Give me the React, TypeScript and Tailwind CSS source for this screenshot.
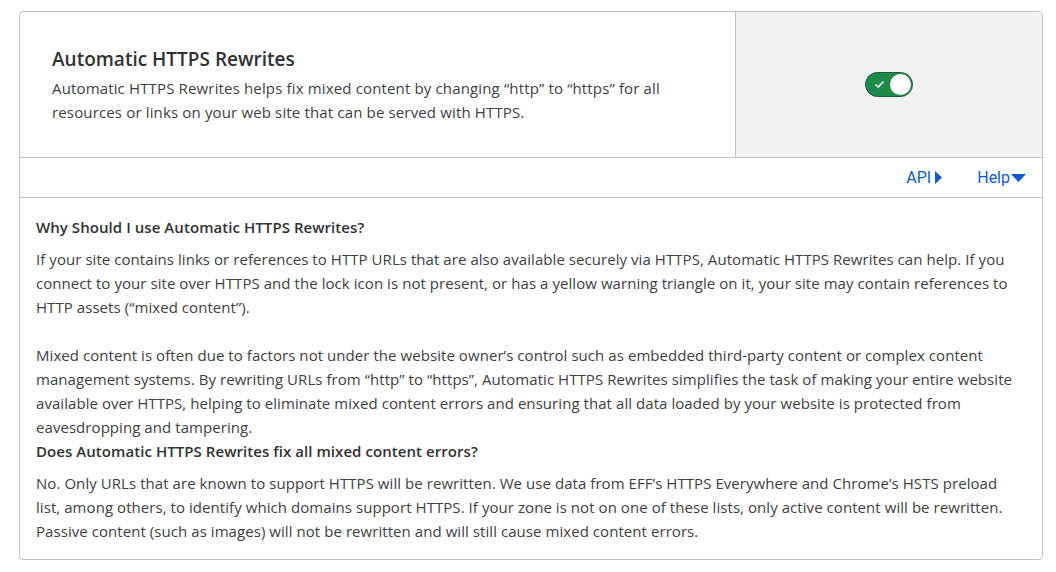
import React from "react";

const font = { fontFamily: '"Open Sans", "Noto Sans", sans-serif' };

function Line({ children }: { children: React.ReactNode }) {
  return <span className="block whitespace-nowrap">{children}</span>;
}

export default function App() {
  return (
    <div className="w-[1056px] h-[572px] bg-white pl-[19px] pt-[11px]" style={font}>
      <div className="w-[1024px] h-[549px] border border-[#c2c2c2] rounded-[4px] overflow-hidden flex flex-col">
        <div className="flex h-[146px] border-b border-[#c2c2c2]">
          <div className="flex-1 pl-[32px] pt-[33px]">
            <h2 className="text-[19px] leading-[28px] font-semibold text-[#313131]">Automatic HTTPS Rewrites</h2>
            <p className="mt-[3px] text-[15px] leading-[24px] tracking-[0.15px] text-[#404040]">
              <Line>Automatic HTTPS Rewrites helps fix mixed content by changing “http” to “https” for all</Line>
              <Line>resources or links on your web site that can be served with HTTPS.</Line>
            </p>
          </div>
          <div className="w-[307px] bg-[#f2f2f2] border-l border-[#c2c2c2] flex items-center justify-center">
            <div className="relative w-[48px] h-[25px] rounded-full bg-[#1e8a4a] border border-[#1a5c35] flex items-center">
              <svg className="absolute left-[8px] top-[7px]" width="11" height="9" viewBox="0 0 11 9">
                <path d="M1.5 4.5 L4.2 7 L9.5 1.5" stroke="white" strokeWidth="1.5" fill="none" />
              </svg>
              <div className="absolute right-[1px] top-[1px] w-[21px] h-[21px] rounded-full bg-white" />
            </div>
          </div>
        </div>
        <div className="h-[40px] border-b border-[#c2c2c2] flex items-center justify-end pr-[16px] gap-[35px] text-[16px] text-[#0a5bd3]" style={{ fontFamily: 'Roboto, "Liberation Sans", sans-serif' }}>
          <span className="flex items-center gap-[3px]">
            API
            <svg width="8" height="13" viewBox="0 0 8 13"><path d="M1 0 L8 6.5 L1 13 Z" fill="#0a5bd3" /></svg>
          </span>
          <span className="flex items-center gap-[1px]">
            Help
            <svg width="15" height="8" viewBox="0 0 15 8"><path d="M0 0 L15 0 L7.5 8 Z" fill="#0a5bd3" /></svg>
          </span>
        </div>
        <div className="flex-1 pl-[16px] pt-[17px] text-[15px] leading-[24px] tracking-[0.06px] text-[#404040]">
          <h3 className="font-semibold text-[#313131] mb-[8px]">Why Should I use Automatic HTTPS Rewrites?</h3>
          <p>
            <Line>If your site contains links or references to HTTP URLs that are also available securely via HTTPS, Automatic HTTPS Rewrites can help. If you</Line>
            <Line>connect to your site over HTTPS and the lock icon is not present, or has a yellow warning triangle on it, your site may contain references to</Line>
            <Line>HTTP assets (“mixed content”).</Line>
          </p>
          <p className="mt-[24px]">
            <Line>Mixed content is often due to factors not under the website owner’s control such as embedded third-party content or complex content</Line>
            <Line>management systems. By rewriting URLs from “http” to “https”, Automatic HTTPS Rewrites simplifies the task of making your entire website</Line>
            <Line>available over HTTPS, helping to eliminate mixed content errors and ensuring that all data loaded by your website is protected from</Line>
            <Line>eavesdropping and tampering.</Line>
          </p>
          <h3 className="font-semibold text-[#313131] mb-[8px]">Does Automatic HTTPS Rewrites fix all mixed content errors?</h3>
          <p>
            <Line>No. Only URLs that are known to support HTTPS will be rewritten. We use data from EFF’s HTTPS Everywhere and Chrome’s HSTS preload</Line>
            <Line>list, among others, to identify which domains support HTTPS. If your zone is not on one of these lists, only active content will be rewritten.</Line>
            <Line>Passive content (such as images) will not be rewritten and will still cause mixed content errors.</Line>
          </p>
        </div>
      </div>
    </div>
  );
}
